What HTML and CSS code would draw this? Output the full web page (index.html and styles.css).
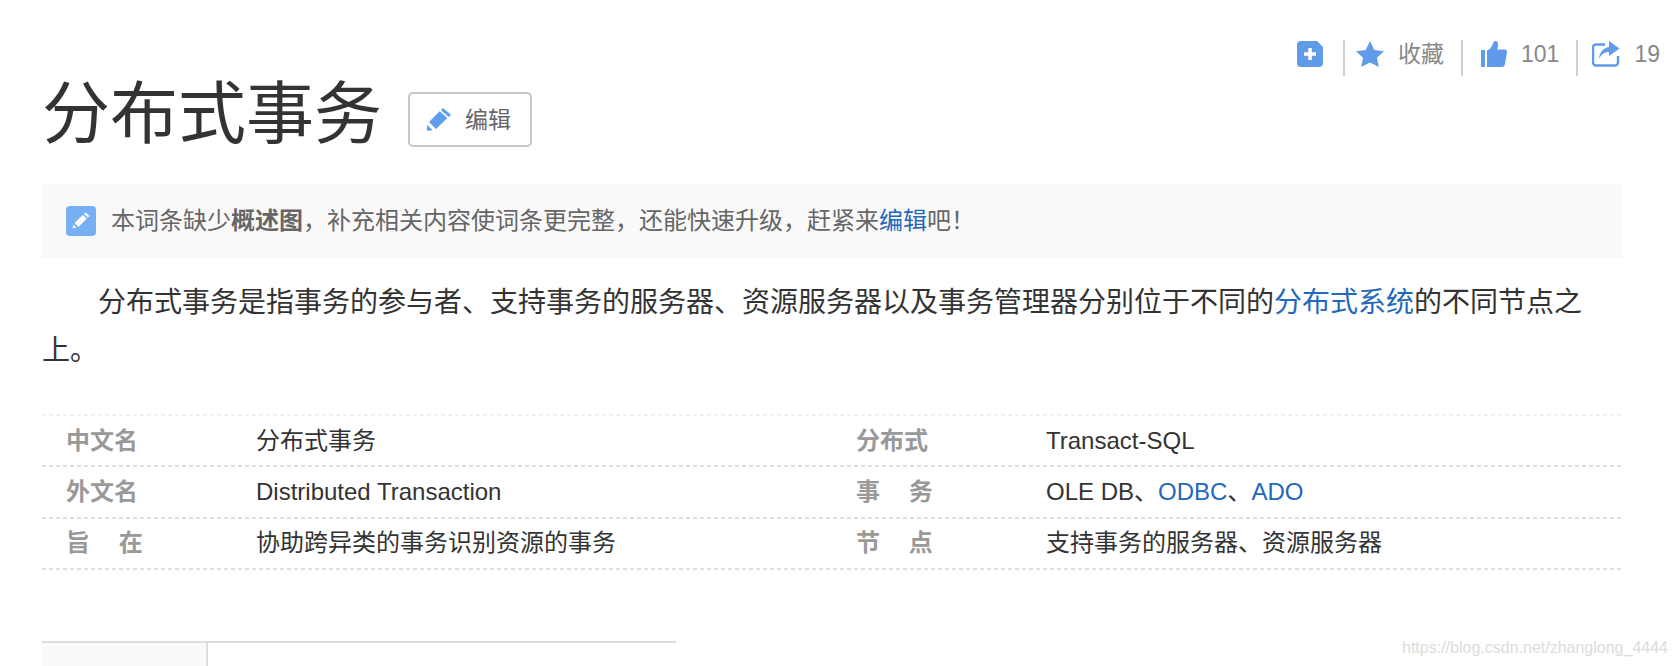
FILE: index.html
```html
<!DOCTYPE html>
<html lang="zh-CN">
<head>
    <meta charset="UTF-8">
    <meta name="viewport" content="width=device-width, initial-scale=1.0">
    <title>分布式事务</title>
    <link rel="stylesheet" href="styles.css">
</head>
<body>
    <div class="container">
        <div class="header">
            <div class="title-group">
                <h1>分布式事务</h1>
                <a class="edit-btn">
                    <svg class="edit-icon" viewBox="0 0 24 23"><path d="M16 0l8 6.700-2.300 2.300L14 2.300z M12.700 3.300l7.600 6.700L9 21l-7-7z M0 16.700L5.700 22.300 0 22.700z" fill="#5f9eea"/></svg>
                    <span>编辑</span>
                </a>
            </div>
            <div class="toolbar">
                <svg class="tool-icon plus" viewBox="0 0 26 26"><path d="M4 0h16l6 6v16a4 4 0 0 1-4 4H4a4 4 0 0 1-4-4V4a4 4 0 0 1 4-4z" fill="#5f9bE8"/><path d="M13 7v12M7 13h12" stroke="#fff" stroke-width="3.600"/></svg>
                <span class="divider"></span>
                <svg class="tool-icon star" viewBox="0 0 28 26"><path d="M14 0l4.300 9 9.700 1.200-7.100 6.600 1.900 9.200L14 21.400 5.200 26l1.900-9.200L0 10.200 9.700 9z" fill="#5f9bE8"/></svg>
                <span class="tool-text">收藏</span>
                <span class="divider"></span>
                <svg class="tool-icon thumb" viewBox="0 0 26 26"><path d="M0 9h4v17H1a1 1 0 0 1-1-1z M6 9.500c3-1 5-4 6-7 .3-1.500 1-2.500 2.500-2.500 2.500 0 3 3 2.500 5l-.8 3.500H24c1.500 0 2 1 2 2.500l-2 12c-.3 1.700-1.200 3-3 3H6z" fill="#5f9bE8"/></svg>
                <span class="tool-text">101</span>
                <span class="divider"></span>
                <svg class="tool-icon share" viewBox="0 0 28 26"><path d="M13 3.500H4a3 3 0 0 0-3 3V21.500a3 3 0 0 0 3 3H23a3 3 0 0 0 3-3V15" fill="none" stroke="#5f9bE8" stroke-width="2.400"/><path d="M17 0l10.500 7.500L17 15v-4c-4.500 0-8 2.500-10 7 .5-6.500 4-11 10-12z" fill="#5f9bE8"/></svg>
                <span class="tool-text">19</span>
            </div>
        </div>

        <div class="notice">
            <svg class="notice-icon" viewBox="0 0 30 30"><rect width="30" height="30" rx="4" fill="#77b0f2"/><path d="M19.500 6.500l4 3.500-1.500 1.500-4-3.500z M16.800 9l4 3.500L12.500 21l-4-4z M7.500 18.500l3 3-4 1z" fill="#fff"/></svg>
            <p>本词条缺少<b>概述图</b>，补充相关内容使词条更完整，还能快速升级，赶紧来<a>编辑</a>吧！</p>
        </div>

        <p class="summary">分布式事务是指事务的参与者、支持事务的服务器、资源服务器以及事务管理器分别位于不同的<a>分布式系统</a>的不同节点之上。</p>

        <div class="info">
            <div class="info-row">
                <div class="info-cell"><span class="label">中文名</span><span class="value">分布式事务</span></div>
                <div class="info-cell"><span class="label">分布式</span><span class="value">Transact-SQL</span></div>
            </div>
            <div class="info-row">
                <div class="info-cell"><span class="label">外文名</span><span class="value">Distributed Transaction</span></div>
                <div class="info-cell"><span class="label">事&thinsp;　务</span><span class="value">OLE DB、<a>ODBC</a>、<a>ADO</a></span></div>
            </div>
            <div class="info-row">
                <div class="info-cell"><span class="label">旨&thinsp;　在</span><span class="value">协助跨异类的事务识别资源的事务</span></div>
                <div class="info-cell"><span class="label">节&thinsp;　点</span><span class="value">支持事务的服务器、资源服务器</span></div>
            </div>
        </div>

        <div class="catalog">
            <div class="catalog-left"></div>
        </div>
    </div>
    <div class="watermark">https://blog.csdn.net/zhanglong_4444</div>
</body>
</html>
```

FILE: styles.css
```css
html, body { margin: 0; padding: 0; height: 666px; overflow: hidden; background-color: #fff; }
body { font-family: "Liberation Sans", "Noto Sans CJK SC", sans-serif; color: #333; position: relative; }
a { color: #2468bd; }
.container { width: 1580px; margin-left: 42px; }
.header { display: flex; justify-content: space-between; align-items: flex-start; margin-right: -38px; }
.title-group { display: flex; align-items: center; padding-top: 74px; padding-bottom: 30px; }
h1 { margin: 0; font-size: 68px; line-height: 80px; font-weight: 400; color: #333; }
.edit-btn { display: flex; align-items: center; gap: 14px; width: 124px; height: 55px; box-sizing: border-box; margin: 11px 0 0 26px; padding-left: 17px; border: 2px solid #c8c8c8; border-radius: 5px; font-size: 23px; line-height: 30px; color: #666; }
.edit-icon { width: 24px; height: 23px; }
.toolbar { display: flex; align-items: center; height: 36px; padding-top: 36px; font-size: 23px; line-height: 30px; color: #888; }
.tool-icon { width: 26px; height: 26px; }
.plus { margin-right: 3px; }
.star { width: 28px; margin-left: -3px; }
.thumb { margin-left: 4px; }
.share { width: 28px; }
.tool-text { margin-left: 14px; }
.divider { width: 2px; height: 36px; margin: 8px 14px 0 17px; background-color: #ccd1d9; }
.notice { display: flex; align-items: center; gap: 15px; height: 74px; padding-left: 24px; background-color: #f9f9f9; font-size: 24px; line-height: 34px; color: #666; }
.notice p { margin: 0; }
.notice b { color: #666; }
.notice-icon { width: 30px; height: 30px; }
.summary { margin: 21px 0 0; font-size: 28px; line-height: 48px; text-indent: 2em; color: #333; }
.info { margin-top: 39px; padding-top: 2px; background: repeating-linear-gradient(to right, #f0f0f0 0 4px, transparent 4px 7px) top / 100% 2px no-repeat; }
.info-row { display: flex; align-items: center; height: 51.4px; box-sizing: border-box; padding-bottom: 2px; background: repeating-linear-gradient(to right, #e0e0e0 0 4px, transparent 4px 7px) bottom / 100% 2px no-repeat; font-size: 24px; line-height: 30px; }
.info-cell { display: flex; width: 50%; padding-left: 24px; box-sizing: border-box; }
.label { width: 190px; flex-shrink: 0; font-weight: 700; color: #999; }
.value { color: #333; }
.catalog { margin-top: 71px; width: 634px; height: 40px; border-top: 2px solid #ddd; }
.catalog-left { width: 164px; height: 100%; background-color: #fafafa; border-right: 2px solid #ddd; }
.watermark { position: absolute; right: 8px; top: 638px; font-size: 16px; line-height: 20px; color: #dcdcdc; }
```
